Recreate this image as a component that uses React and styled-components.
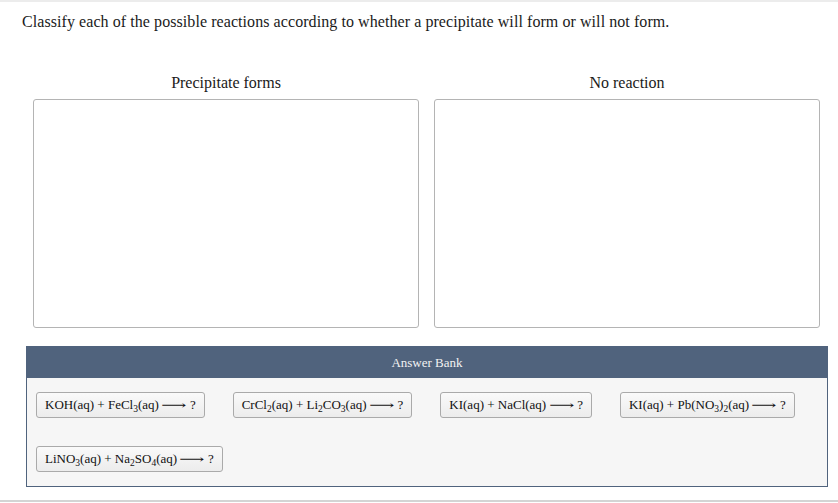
import React from 'react';
import styled, { createGlobalStyle } from 'styled-components';

const GlobalStyle = createGlobalStyle`
  body {
    margin: 0;
    background: #fff;
    font-family: "Liberation Serif", "Times New Roman", serif;
    color: #222;
  }
`;

const zones = ['Precipitate forms', 'No reaction'];

// even entries are normal text, odd entries are subscripts
const reactions = [
  ['KOH(aq) + FeCl', '3', '(aq)'],
  ['CrCl', '2', '(aq) + Li', '2', 'CO', '3', '(aq)'],
  ['KI(aq) + NaCl(aq)'],
  ['KI(aq) + Pb(NO', '3', ')', '2', '(aq)'],
  ['LiNO', '3', '(aq) + Na', '2', 'SO', '4', '(aq)']
];

const renderFormula = parts =>
  parts.map((p, i) => (i % 2 === 1 ? <Sub key={i}>{p}</Sub> : <span key={i}>{p}</span>));

const App = () => (
  <Page>
    <GlobalStyle />
    <Title>Classify each of the possible reactions according to whether a precipitate will form or will not form.</Title>
    <Zones>
      {zones.map(label => (
        <Zone key={label}>
          <ZoneLabel>{label}</ZoneLabel>
          <DropBox />
        </Zone>
      ))}
    </Zones>
    <Bank>
      <BankHeader>Answer Bank</BankHeader>
      <BankBody>
        {reactions.map((r, i) => (
          <Chip key={i}>
            <ChipText>
              {renderFormula(r)}
              <Arrow>
                <ArrowGlyph>⟶</ArrowGlyph>
              </Arrow>
              <Q>?</Q>
            </ChipText>
          </Chip>
        ))}
      </BankBody>
    </Bank>
    <Footer />
  </Page>
);

export default App;

const Page = styled.div`
  width: 838px;
  height: 503px;
  box-sizing: border-box;
  border-top: 2px solid #ececec;
  display: flex;
  flex-direction: column;
`;

const Title = styled.p`
  margin: 10px 0 0 22px;
  font-size: 16px;
  line-height: 20px;
  letter-spacing: 0.07px;
  color: #1a1a1a;
`;

const Zones = styled.div`
  display: flex;
  gap: 15px;
  margin: 41px 0 0 33px;
`;

const Zone = styled.div`
  width: 386px;
  display: flex;
  flex-direction: column;
  align-items: center;
`;

const ZoneLabel = styled.div`
  font-size: 16px;
  line-height: 20px;
  height: 26px;
  color: #1a1a1a;
`;

const DropBox = styled.div`
  width: 100%;
  height: 229px;
  box-sizing: border-box;
  border: 1px solid #b4b4b4;
  border-radius: 3px;
  background: #fff;
`;

const Bank = styled.div`
  margin: 18px 0 0 26px;
  width: 802px;
  box-sizing: border-box;
  border: 1px solid #50637d;
`;

const BankHeader = styled.div`
  height: 31px;
  background: #50637d;
  color: #f2f2f2;
  font-size: 13px;
  line-height: 31px;
  text-align: center;
`;

const BankBody = styled.div`
  background: #f6f6f6;
  display: flex;
  flex-wrap: wrap;
  gap: 28px 28px;
  padding: 14px 9px 14px 9px;
`;

const Chip = styled.div`
  height: 26px;
  box-sizing: border-box;
  padding: 0 8px;
  display: flex;
  align-items: center;
  border: 1px solid #aaa;
  border-radius: 3px;
  background: linear-gradient(#fafafa, #ececec);
  color: #111;
`;

const ChipText = styled.span`
  font-size: 13px;
  line-height: 16px;
  white-space: pre;
`;

const Sub = styled.span`
  font-size: 9.5px;
  position: relative;
  top: 3px;
`;

const Arrow = styled.span`
  display: inline-flex;
  justify-content: center;
  width: 20px;
  margin: 0 6px 0 5px;
`;

const ArrowGlyph = styled.span`
  display: inline-block;
  font-family: "DejaVu Serif", serif;
  font-size: 12px;
  transform: scaleX(1.45);
`;

const Q = styled.span`
  font-size: 13px;
`;

const Footer = styled.div`
  margin-top: auto;
  margin-bottom: 1px;
  height: 2px;
  background: #d4d4d4;
`;
